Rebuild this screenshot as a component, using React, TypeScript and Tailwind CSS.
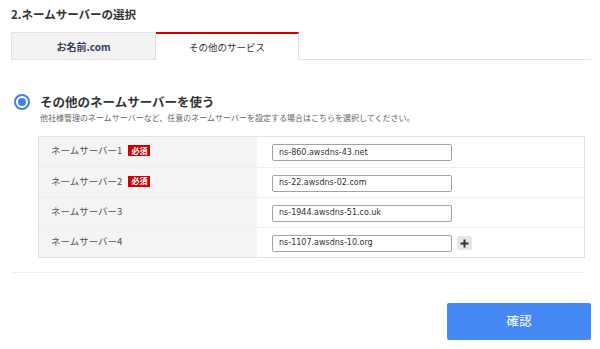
import React from "react";

const rows = [
  { label: "ネームサーバー1", req: true, value: "ns-860.awsdns-43.net" },
  { label: "ネームサーバー2", req: true, value: "ns-22.awsdns-02.com" },
  { label: "ネームサーバー3", req: false, value: "ns-1944.awsdns-51.co.uk" },
  { label: "ネームサーバー4", req: false, value: "ns-1107.awsdns-10.org", plus: true },
];

export default function App() {
  return (
    <div
      className="w-[600px] h-[349px] bg-white overflow-hidden text-[#333]"
      style={{ fontFamily: '"Noto Sans CJK JP", "Noto Sans", sans-serif' }}
    >
      <div className="pt-[6px] pl-[11px] text-[11.5px] font-bold leading-[16px] text-[#333]">
        2.ネームサーバーの選択
      </div>
      <div className="flex ml-[11px] mr-[9px] mt-[10px] h-[28px]">
        <div className="w-[145px] bg-[#f3f3f3] border border-[#e2e2e2] flex items-center justify-center text-[10px] font-bold text-[#33405c]">
          お名前.com
        </div>
        <div className="w-[143px] bg-white border-t-2 border-t-[#d40000] border-r border-r-[#e2e2e2] flex items-center justify-center text-[9.5px] text-[#333]">
          その他のサービス
        </div>
        <div className="flex-1 border-b border-[#e2e2e2]" />
      </div>
      <div className="flex items-center mt-[33px] ml-[14px] h-[18px]">
        <div className="w-[16px] h-[16px] rounded-full border-2 border-[#3f82ec] flex items-center justify-center">
          <div className="w-[8px] h-[8px] rounded-full bg-[#3f82ec]" />
        </div>
        <div className="ml-[10px] text-[12.5px] font-bold text-[#333] leading-[18px]">
          その他のネームサーバーを使う
        </div>
      </div>
      <div className="ml-[40px] mt-[1px] text-[8px] leading-[12px] text-[#666]">
        他社様管理のネームサーバーなど、任意のネームサーバーを設定する場合はこちらを選択してください。
      </div>
      <div className="ml-[38px] mr-[15px] mt-[12px] border border-[#e2e2e2]">
        {rows.map((r, i) => (
          <div
            key={r.label}
            className={`flex h-[30px] ${i > 0 ? "border-t border-dotted border-[#dedede]" : ""}`}
          >
            <div className="w-[218px] bg-[#f4f4f4] flex items-center pl-[12px] pb-[3px]">
              <span className="text-[9.5px] text-[#555]">{r.label}</span>
              {r.req && (
                <span className="ml-[6px] bg-[#cc0000] text-white text-[8px] font-bold leading-[10px] px-[3px] h-[11px] flex items-center">
                  必須
                </span>
              )}
            </div>
            <div className="flex-1 flex items-center pl-[15px] pt-[1px]">
              <div
                className="w-[180px] h-[17px] border border-[#a3a3a3] rounded-[2px] flex items-center pl-[6px] text-[8px] text-[#333]"
                style={{ fontFamily: '"DejaVu Sans", sans-serif' }}
              >
                {r.value}
              </div>
              {r.plus && (
                <div className="ml-[5px] w-[15px] h-[14px] bg-[#e6e6e6] rounded-[2px] flex items-center justify-center">
                  <svg width="9" height="9" viewBox="0 0 9 9">
                    <path d="M4.5 0.5v8M0.5 4.5h8" stroke="#333" strokeWidth="2" />
                  </svg>
                </div>
              )}
            </div>
          </div>
        ))}
      </div>
      <div className="ml-[12px] mr-[15px] mt-[14px] h-[1px] bg-[#eeeeee]" />
      <div className="flex justify-end mr-[9px] mt-[30px]">
        <button className="w-[144px] h-[37px] bg-[#4589f2] rounded-[2px] text-white text-[12.5px] flex items-center justify-center">
          確認
        </button>
      </div>
    </div>
  );
}
